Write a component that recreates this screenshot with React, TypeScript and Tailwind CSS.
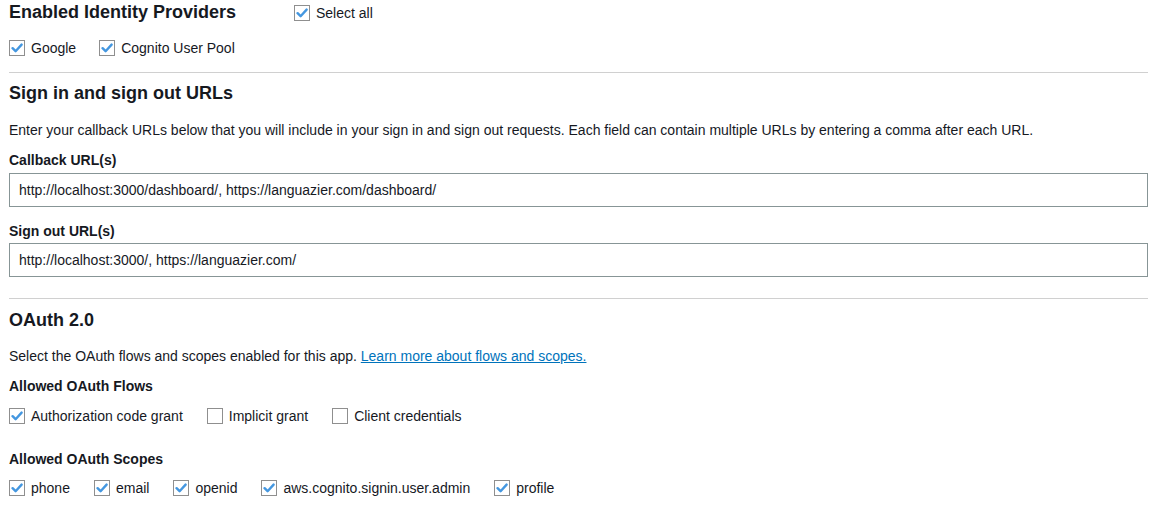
import React from 'react';

function Check({ checked }: { checked: boolean }) {
  return (
    <span className="flex h-4 w-4 shrink-0 items-center justify-center border border-[#8f8f8f] bg-white">
      {checked && (
        <svg width="12" height="12" viewBox="0 0 12 12" fill="none">
          <path d="M1.6 6.2 L4.6 9.2 L10.6 2.6" stroke="#4497e0" strokeWidth="2.4" strokeLinecap="round" strokeLinejoin="round" />
        </svg>
      )}
    </span>
  );
}

function Option({ label, checked = true }: { label: string; checked?: boolean }) {
  return (
    <label className="flex h-5 items-center gap-[6px]">
      <Check checked={checked} />
      <span className="text-[14px] leading-5">{label}</span>
    </label>
  );
}

function Field({ value }: { value: string }) {
  return (
    <div className="flex h-[34px] items-center border border-[#879596] bg-white pl-[9px] text-[14px]">
      {value}
    </div>
  );
}

const divider = <div className="h-px bg-[#d0d0d0]" />;

export default function App() {
  return (
    <div
      className="min-h-[508px] bg-white pl-[9px] pr-[8px] text-[#16191f]"
      style={{ fontFamily: '"Liberation Sans", Arial, sans-serif' }}
    >
      <div className="flex h-6 items-center">
        <h2 className="w-[285px] text-[18px] font-bold leading-6">Enabled Identity Providers</h2>
        <div className="mt-[2px]">
          <Option label="Select all" />
        </div>
      </div>
      <div className="mt-[14px] flex gap-[23px]">
        <Option label="Google" />
        <Option label="Cognito User Pool" />
      </div>
      <div className="mt-[14px]">{divider}</div>

      <h2 className="mt-2 text-[18px] font-bold leading-6">Sign in and sign out URLs</h2>
      <p className="mt-[15px] text-[14px] leading-5">
        Enter your callback URLs below that you will include in your sign in and sign out requests. Each field can contain multiple URLs by entering a comma after each URL.
      </p>
      <div className="mt-[10px] text-[14px] font-bold leading-5">Callback URL(s)</div>
      <div className="mt-[3px]">
        <Field value="http://localhost:3000/dashboard/, https://languazier.com/dashboard/" />
      </div>
      <div className="mt-[14px] text-[14px] font-bold leading-5">Sign out URL(s)</div>
      <div className="mt-[2px]">
        <Field value="http://localhost:3000/, https://languazier.com/" />
      </div>
      <div className="mt-[21px]">{divider}</div>

      <h2 className="mt-[9px] text-[18px] font-bold leading-6">OAuth 2.0</h2>
      <p className="mt-[14px] text-[14px] leading-5">
        Select the OAuth flows and scopes enabled for this app.{' '}
        <a className="text-[#0073bb] underline" href="#">Learn more about flows and scopes.</a>
      </p>
      <div className="mt-[10px] text-[14px] font-bold leading-5">Allowed OAuth Flows</div>
      <div className="mt-[10px] flex gap-6">
        <Option label="Authorization code grant" />
        <Option label="Implicit grant" checked={false} />
        <Option label="Client credentials" checked={false} />
      </div>
      <div className="mt-[23px] text-[14px] font-bold leading-5">Allowed OAuth Scopes</div>
      <div className="mt-[9px] flex gap-6">
        <Option label="phone" />
        <Option label="email" />
        <Option label="openid" />
        <Option label="aws.cognito.signin.user.admin" />
        <Option label="profile" />
      </div>
    </div>
  );
}
